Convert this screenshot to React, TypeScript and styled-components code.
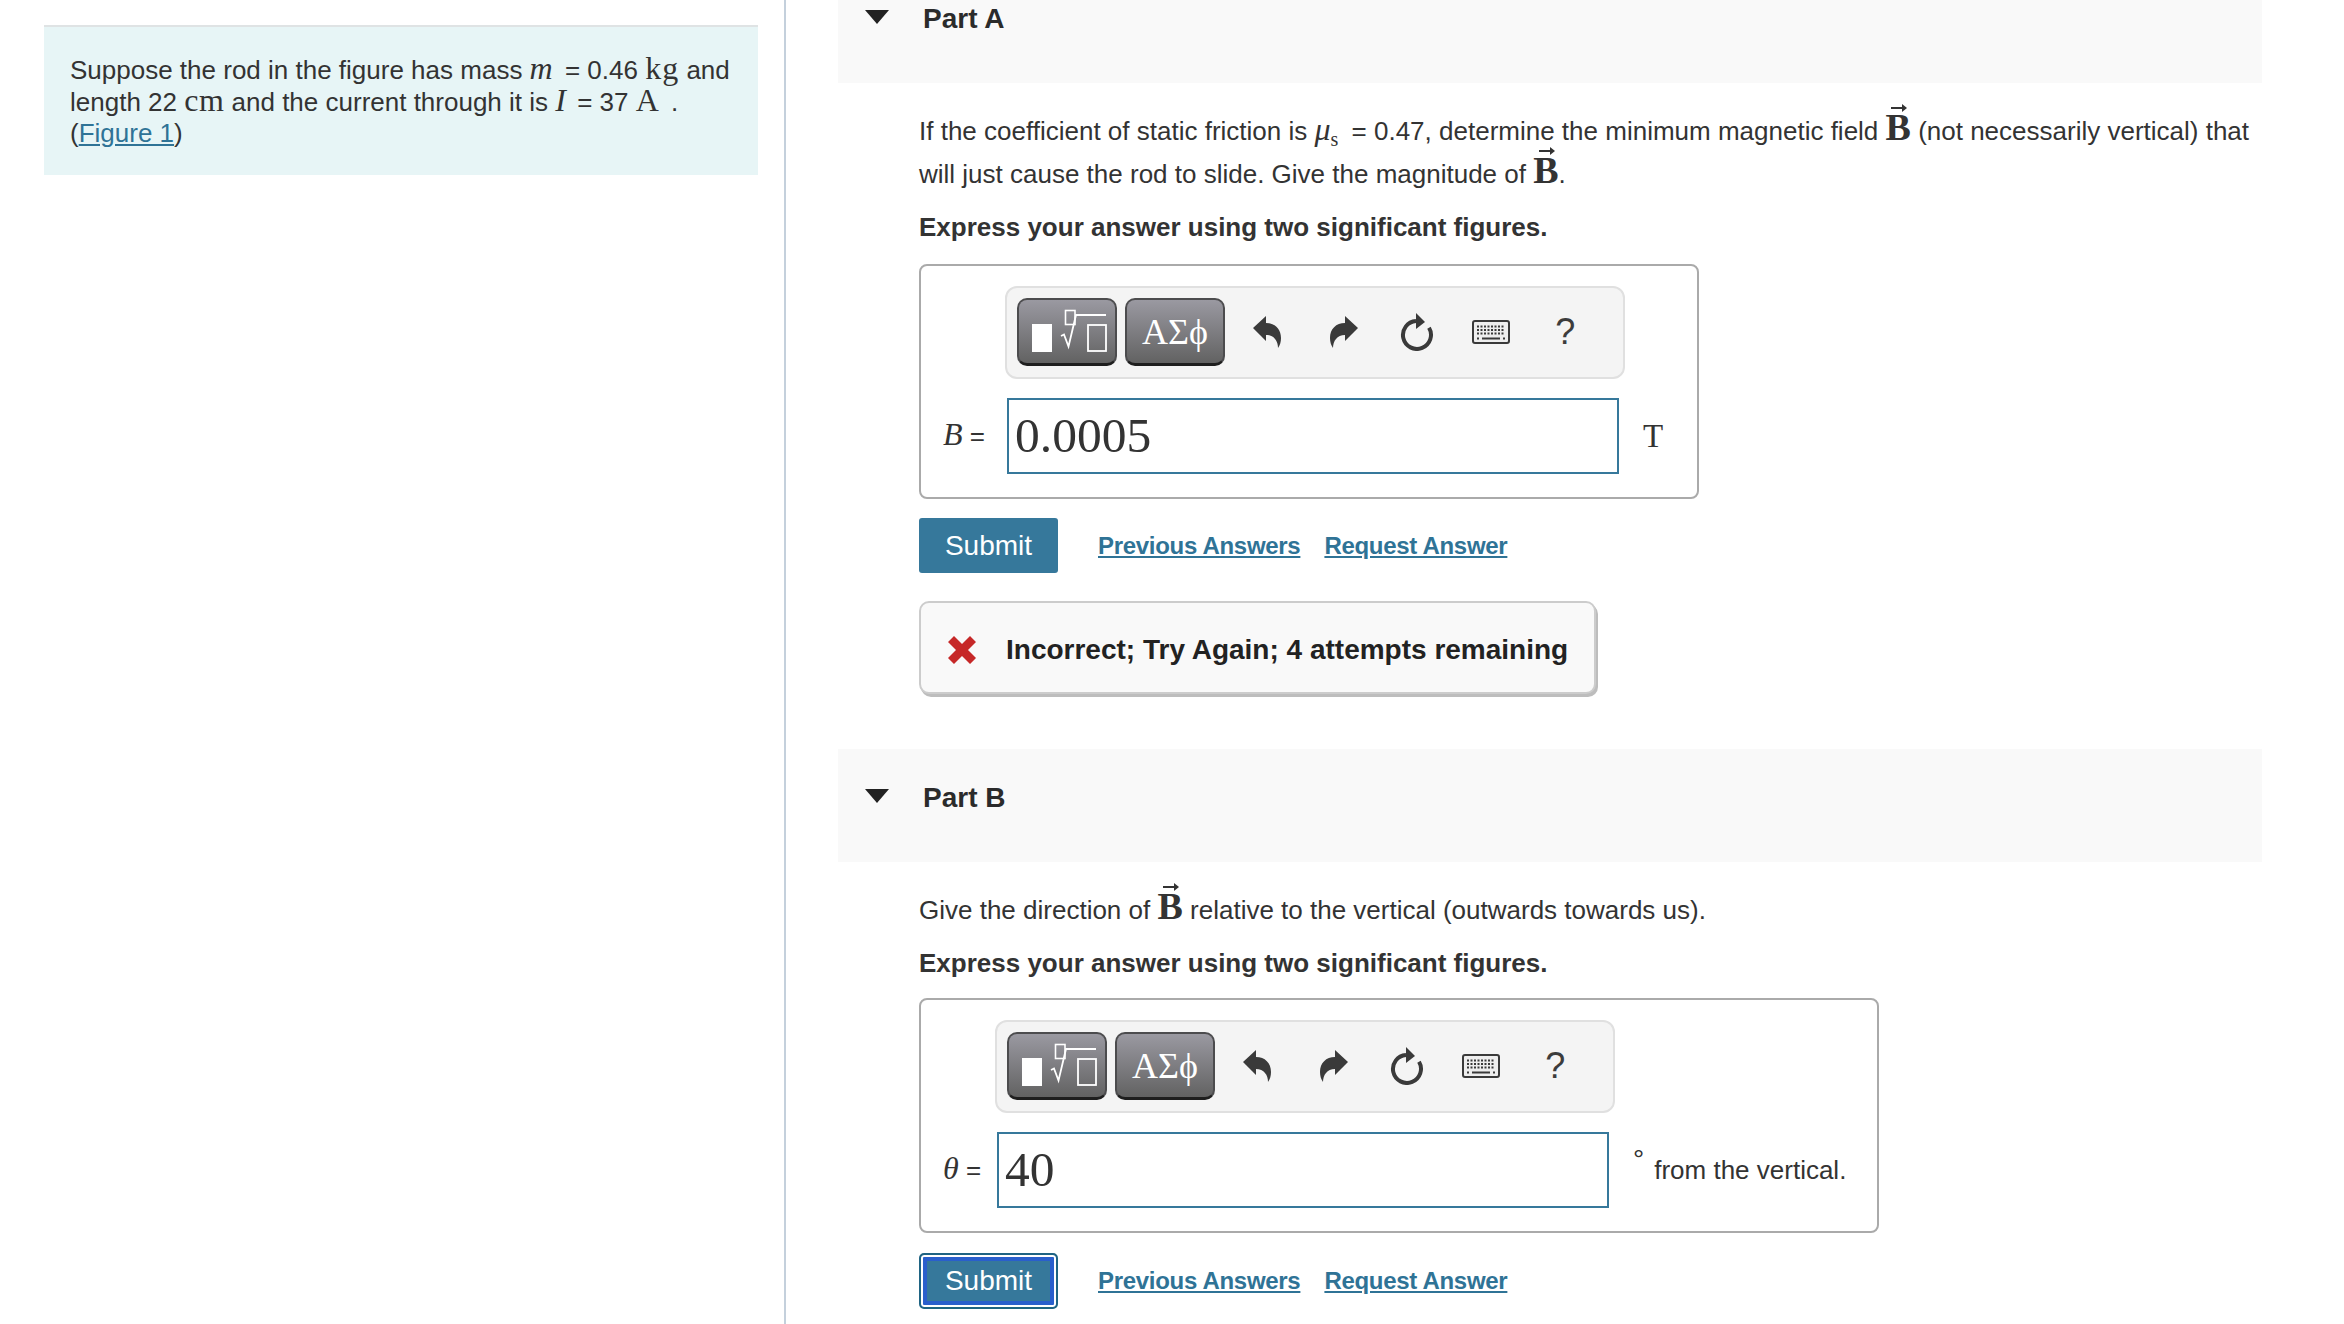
import React from "react";
import styled, { createGlobalStyle } from "styled-components";

const Global = createGlobalStyle`
  html, body { margin: 0; padding: 0; background: #fff; }
  body { font-family: "Liberation Sans", Arial, sans-serif; color: #333; height: 1324px; overflow: hidden; }
`;

const Page = styled.div`
  display: flex;
  height: 1324px;
  overflow: hidden;
`;
const Sidebar = styled.aside`
  width: 714px;
  flex: none;
  padding: 25px 26px 0 44px;
  border-right: 2px solid #c4d0dc;
`;
const Intro = styled.div`
  background: #e7f5f6;
  border-top: 2px solid #dfe3e4;
  padding: 28px 26px 25px;
  height: 95px;
  font-size: 26px;
  line-height: 31.5px;
`;
const FigureLink = styled.a`
  color: #2f7396;
  text-decoration: underline;
`;
const Main = styled.main`
  flex: 1;
  padding: 0 82px 0 52px;
  margin-top: -30px;
  min-width: 0;
`;
const PartHeader = styled.div`
  display: flex;
  align-items: center;
  background: #f9f9f9;
  height: 113px;
  padding: 0 0 15px 27px;
  box-sizing: border-box;
  font-size: 28px;
  font-weight: 700;
  color: #2b2b2b;
`;
const Caret = styled.svg`
  width: 24px;
  height: 14px;
  margin-right: 34px;
  margin-top: -4px;
  flex: none;
`;
const PartBody = styled.section`
  padding: 27px 0 0 81px;
`;
const Prose = styled.p`
  margin: 0;
  font-size: 26px;
  line-height: 43px;
`;
const Strong = styled.p`
  margin: 15px 0 0;
  font-size: 26px;
  line-height: 32px;
  font-weight: 700;
`;
const Serif = styled.span<{ $sp?: number }>`
  font-family: "Liberation Serif", serif;
  font-size: 32px;
  line-height: 0;
  letter-spacing: ${(p) => p.$sp ?? 0}px;
`;
const MathItalic = styled(Serif)`
  font-style: italic;
`;
const Sub = styled.sub`
  font-family: "Liberation Serif", serif;
  font-size: 20px;
  line-height: 0;
  margin-right: 6px;
`;
const VecWrap = styled.span`
  position: relative;
  font-family: "Liberation Serif", serif;
  font-size: 38px;
  line-height: 0;
  font-weight: 700;
`;
const VecArrow = styled.svg`
  position: absolute;
  left: 50%;
  top: -3px;
  width: 16px;
  height: 10px;
  margin-left: -7px;
`;
const AnswerBox = styled.div<{ $w: number; $mt: number }>`
  width: ${(p) => p.$w}px;
  height: 235px;
  margin-top: ${(p) => p.$mt}px;
  border: 2px solid #aaa;
  border-radius: 8px;
  box-sizing: border-box;
  padding: 20px 0 0 22px;
`;
const Toolbar = styled.div<{ $ml: number }>`
  display: flex;
  align-items: flex-start;
  gap: 8px;
  width: 620px;
  height: 93px;
  margin-left: ${(p) => p.$ml}px;
  padding: 10px;
  box-sizing: border-box;
  background: #f4f4f4;
  border: 2px solid #e0e0e0;
  border-radius: 12px;
`;
const ToolButton = styled.div`
  width: 100px;
  height: 68px;
  flex: none;
  display: flex;
  align-items: center;
  justify-content: center;
  box-sizing: border-box;
  border: 2px solid #4c4c4e;
  border-bottom: 3px solid #1e1e1e;
  border-radius: 10px;
  background: linear-gradient(#9a99a1, #626262);
  color: #fff;
  font-family: "Liberation Serif", serif;
  font-size: 36px;
`;
const IconGroup = styled.div`
  display: flex;
  margin-left: -3px;
`;
const IconSlot = styled.div`
  width: 74.5px;
  height: 68px;
  flex: none;
  display: flex;
  align-items: center;
  justify-content: center;
  font-size: 36px;
  color: #3c3c3c;
`;
const UndoSvg = styled.svg<{ $flip?: boolean }>`
  width: 28px;
  height: 32px;
  ${(p) => (p.$flip ? "transform: scaleX(-1); margin-left: 5px;" : "")}
`;
const ResetSvg = styled.svg`
  width: 36px;
  height: 38px;
  margin-left: 2px;
`;
const AnswerRow = styled.div`
  display: flex;
  align-items: center;
  margin-top: 19px;
`;
const VarLabel = styled.div<{ $w: number }>`
  width: ${(p) => p.$w}px;
  flex: none;
  font-size: 26px;
  white-space: nowrap;
`;
const AnswerInput = styled.div`
  width: 612px;
  height: 76px;
  flex: none;
  box-sizing: border-box;
  border: 2px solid #36789b;
  padding-left: 6px;
  font-family: "Liberation Serif", serif;
  font-size: 49.5px;
  line-height: 72px;
  color: #333;
`;
const Unit = styled.div`
  margin-left: 24px;
  font-family: "Liberation Serif", serif;
  font-size: 33px;
`;
const UnitText = styled.div`
  margin-left: 24px;
  font-size: 26px;
  white-space: nowrap;
`;
const Degree = styled.sup`
  font-size: 28px;
  line-height: 0;
  margin-right: 10px;
`;
const ActionRow = styled.div<{ $mt: number }>`
  display: flex;
  align-items: center;
  margin-top: ${(p) => p.$mt}px;
`;
const SubmitButton = styled.div<{ $focus?: boolean }>`
  width: 139px;
  height: ${(p) => (p.$focus ? 56 : 55)}px;
  flex: none;
  display: flex;
  align-items: center;
  justify-content: center;
  box-sizing: border-box;
  background: #36789b;
  color: #fff;
  font-size: 28px;
  border-radius: ${(p) => (p.$focus ? 5 : 3)}px;
  ${(p) =>
    p.$focus
      ? `border: 2px solid #1f6483; box-shadow: inset 0 0 0 2px #fff, inset 0 0 0 6px #2a5fcc;`
      : ""}
`;
const ActionLink = styled.a`
  color: #2f7396;
  font-size: 24px;
  font-weight: 700;
  letter-spacing: -0.3px;
  text-decoration: underline;
  margin-left: 24px;
  &:first-of-type { margin-left: 40px; }
`;
const Feedback = styled.div`
  display: flex;
  align-items: center;
  width: 677px;
  height: 93px;
  margin-top: 28px;
  margin-bottom: 55px;
  box-sizing: border-box;
  padding: 4px 0 0 27px;
  background: #f9f9f9;
  border: 2px solid #ccc;
  border-radius: 10px;
  box-shadow: 2px 3px 0 #bdbdbd;
  font-size: 28px;
  font-weight: 700;
  color: #222;
  white-space: nowrap;
`;
const CrossIcon = styled.svg`
  width: 28px;
  height: 28px;
  margin-right: 30px;
  flex: none;
`;

const Vec = () => (
  <VecWrap>
    B
    <VecArrow viewBox="0 0 16 10">
      <path d="M0 4h11V1l5 4-5 4V6H0z" fill="#333" />
    </VecArrow>
  </VecWrap>
);

const TemplateIcon = () => (
  <svg width="100" height="68" viewBox="0 0 100 68" fill="none" style={{ flex: "none" }}>
    <rect x="15" y="26" width="20" height="28" fill="#fff" />
    <rect x="48.500" y="12.500" width="9.500" height="14" stroke="#fff" strokeWidth="1.6" />
    <path d="M44 38l3-1.500 4.500 12L59 17h30" stroke="#fff" strokeWidth="1.800" />
    <rect x="71" y="27" width="18" height="26" stroke="#fff" strokeWidth="1.800" />
  </svg>
);
const UndoIcon = ({ flip }: { flip?: boolean }) => (
  <UndoSvg viewBox="0 0 28 32" $flip={flip}>
    <path d="M0 12L13 0v7c9 0 15 6 15 15 0 4-1 7-3 10 0-7-4-13-12-13v6z" fill="#3a3a3a" />
  </UndoSvg>
);
const ResetIcon = () => (
  <ResetSvg viewBox="0 0 36 38" fill="none">
    <path d="M17 8A14 14 0 1 0 30 14.800" stroke="#3a3a3a" strokeWidth="4" />
    <path d="M17 0l9 9-9 7z" fill="#3a3a3a" />
  </ResetSvg>
);
const KeyboardIcon = () => (
  <svg width="38" height="24" viewBox="0 0 38 24" fill="none">
    <rect x="1" y="1" width="36" height="22" rx="2" stroke="#3a3a3a" strokeWidth="2" fill="#eee" />
    <path d="M5 6.500h28M5 10h28M5 13.500h28" stroke="#3a3a3a" strokeWidth="2" strokeDasharray="2 1.500" />
    <path d="M10 18.500h18" stroke="#3a3a3a" strokeWidth="2" />
    <path d="M5 18.500h2M31 18.500h2" stroke="#3a3a3a" strokeWidth="2" />
  </svg>
);

const Answer = ({
  w, mt, labelW, label, value, children,
}: {
  w: number; mt: number; labelW: number; label: React.ReactNode; value: string; children: React.ReactNode;
}) => (
  <AnswerBox $w={w} $mt={mt}>
    <Toolbar $ml={labelW - 2}>
      <ToolButton><TemplateIcon /></ToolButton>
      <ToolButton>ΑΣϕ</ToolButton>
      <IconGroup>
        <IconSlot><UndoIcon /></IconSlot>
        <IconSlot><UndoIcon flip /></IconSlot>
        <IconSlot><ResetIcon /></IconSlot>
        <IconSlot><KeyboardIcon /></IconSlot>
        <IconSlot>?</IconSlot>
      </IconGroup>
    </Toolbar>
    <AnswerRow>
      <VarLabel $w={labelW}>{label}</VarLabel>
      <AnswerInput>{value}</AnswerInput>
      {children}
    </AnswerRow>
  </AnswerBox>
);

const Triangle = () => (
  <Caret viewBox="0 0 24 14"><path d="M0 0h24L12 14z" fill="#222" /></Caret>
);

export default function App() {
  return (
    <Page>
      <Global />
      <Sidebar>
        <Intro>
          Suppose the rod in the figure has mass <MathItalic $sp={5}>m</MathItalic> = 0.46 <Serif $sp={1}>kg</Serif> and
          length 22 <Serif $sp={0.5}>cm</Serif> and the current through it is <MathItalic $sp={4}>I</MathItalic> = 37 <Serif $sp={5}>A</Serif> .
          <br />
          (<FigureLink>Figure 1</FigureLink>)
        </Intro>
      </Sidebar>
      <Main>
        <PartHeader><Triangle />Part A</PartHeader>
        <PartBody>
          <Prose>
            If the coefficient of static friction is <MathItalic>μ</MathItalic><Sub>s</Sub> = 0.47, determine the minimum magnetic field <Vec /> (not necessarily vertical) that will just cause the rod to slide. Give the magnitude of <Vec />.
          </Prose>
          <Strong>Express your answer using two significant figures.</Strong>
          <Answer
            w={780}
            mt={21}
            labelW={64}
            label={<><MathItalic>B</MathItalic> =</>}
            value="0.0005"
          >
            <Unit>T</Unit>
          </Answer>
          <ActionRow $mt={19}>
            <SubmitButton>Submit</SubmitButton>
            <ActionLink>Previous Answers</ActionLink>
            <ActionLink>Request Answer</ActionLink>
          </ActionRow>
          <Feedback>
            <CrossIcon viewBox="0 0 28 28">
              <path d="M0 6l6-6 8 8 8-8 6 6-8 8 8 8-6 6-8-8-8 8-6-6 8-8z" fill="#c62828" />
            </CrossIcon>
            Incorrect; Try Again; 4 attempts remaining
          </Feedback>
        </PartBody>
        <PartHeader><Triangle />Part B</PartHeader>
        <PartBody>
          <Prose>Give the direction of <Vec /> relative to the vertical (outwards towards us).</Prose>
          <Strong>Express your answer using two significant figures.</Strong>
          <Answer
            w={960}
            mt={19}
            labelW={54}
            label={<><MathItalic>θ</MathItalic> =</>}
            value="40"
          >
            <UnitText><Degree>°</Degree>from the vertical.</UnitText>
          </Answer>
          <ActionRow $mt={20}>
            <SubmitButton $focus>Submit</SubmitButton>
            <ActionLink>Previous Answers</ActionLink>
            <ActionLink>Request Answer</ActionLink>
          </ActionRow>
        </PartBody>
      </Main>
    </Page>
  );
}
